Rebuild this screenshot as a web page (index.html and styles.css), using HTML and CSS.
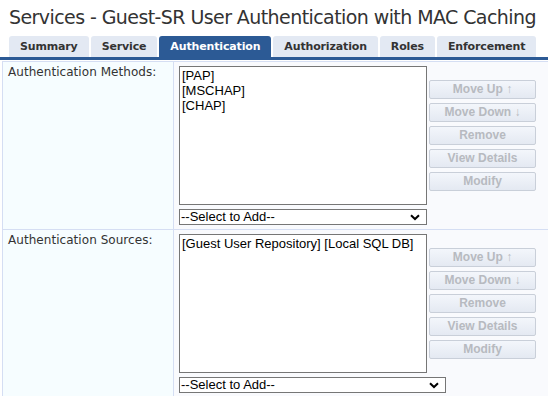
FILE: index.html
```html
<!DOCTYPE html>
<html>
<head>
<meta charset="utf-8">
<link rel="stylesheet" href="styles.css">
</head>
<body>
<h1 class="title">Services - Guest-SR User Authentication with MAC Caching</h1>
<div class="tabs">
  <div class="tab">Summary</div>
  <div class="tab">Service</div>
  <div class="tab active">Authentication</div>
  <div class="tab">Authorization</div>
  <div class="tab">Roles</div>
  <div class="tab">Enforcement</div>
</div>
<div class="form">
  <div class="row">
    <div class="label">Authentication Methods:</div>
    <div class="field">
      <div class="listrow">
        <div class="listbox">
          <div>[PAP]</div>
          <div>[MSCHAP]</div>
          <div>[CHAP]</div>
        </div>
        <div class="buttons">
          <div class="btn">Move Up ↑</div>
          <div class="btn">Move Down ↓</div>
          <div class="btn">Remove</div>
          <div class="btn">View Details</div>
          <div class="btn">Modify</div>
        </div>
      </div>
      <div class="select">--Select to Add--<svg class="chev" width="10" height="7" viewBox="0 0 10 7"><path d="M1 1.2 L5 5 L9 1.2" fill="none" stroke="#000" stroke-width="2"/></svg></div>
    </div>
  </div>
  <div class="row">
    <div class="label">Authentication Sources:</div>
    <div class="field">
      <div class="listrow">
        <div class="listbox">
          <div>[Guest User Repository] [Local SQL DB]</div>
        </div>
        <div class="buttons">
          <div class="btn">Move Up ↑</div>
          <div class="btn">Move Down ↓</div>
          <div class="btn">Remove</div>
          <div class="btn">View Details</div>
          <div class="btn">Modify</div>
        </div>
      </div>
      <div class="select wide">--Select to Add--<svg class="chev" width="10" height="7" viewBox="0 0 10 7"><path d="M1 1.2 L5 5 L9 1.2" fill="none" stroke="#000" stroke-width="2"/></svg></div>
    </div>
  </div>
</div>
</body>
</html>
```
FILE: styles.css
```css
html, body {
  margin: 0;
  padding: 0;
  background: #ffffff;
  font-family: "DejaVu Sans", Verdana, sans-serif;
  color: #333;
  overflow: hidden;
}
.title {
  margin: 0;
  padding: 5px 0 0 9px;
  height: 36px;
  box-sizing: border-box;
  font-size: 19px;
  font-weight: normal;
  line-height: 24px;
  letter-spacing: -0.58px;
  color: #333;
  white-space: nowrap;
}
.tabs {
  display: flex;
  gap: 2px;
  padding-left: 9px;
  border-bottom: 3px solid #2c5a95;
}
.tab {
  height: 21px;
  line-height: 22px;
  padding: 0 11px;
  background: #e3e9f3;
  border-radius: 3px 3px 0 0;
  font-size: 11px;
  font-weight: bold;
  letter-spacing: -0.15px;
  color: #333;
}
.tab.active {
  background: #2c5a95;
  color: #fff;
}
.form {
  margin: 1px 0 0 2px;
  border-top: 1px solid #d5def3;
}
.row {
  display: grid;
  grid-template-columns: 172px 1fr;
  border-bottom: 1px solid #d5def3;
}
.row:last-child { border-bottom: none; }
.label {
  background: #f6fdff;
  border-left: 1px solid #d5def3;
  border-right: 1px solid #d5def3;
  padding: 3px 0 0 5px;
  font-size: 12px;
  line-height: 15px;
  letter-spacing: 0.05px;
  color: #333;
}
.field {
  background: #f9fafd;
  padding: 4px 0 4px 5px;
}
.listrow {
  display: flex;
  align-items: center;
  gap: 2px;
}
.listbox {
  width: 248px;
  height: 139px;
  box-sizing: border-box;
  border: 1px solid #767676;
  background: #fff;
  padding: 1px 2px;
  font-family: "Liberation Sans", Arial, sans-serif;
  font-size: 13px;
  line-height: 15px;
  color: #000;
}
.buttons {
  display: flex;
  flex-direction: column;
  gap: 4px;
}
.btn {
  width: 107px;
  height: 19px;
  box-sizing: border-box;
  border: 1px solid #c9cfd9;
  border-radius: 2px;
  background: linear-gradient(#f3f6fb, #e4e9f2);
  font-family: "Liberation Sans", Arial, sans-serif;
  font-size: 12px;
  font-weight: bold;
  color: #b7bac0;
  text-align: center;
  line-height: 17px;
}
.select {
  margin-top: 4px;
  width: 248px;
  height: 16px;
  box-sizing: border-box;
  border: 1px solid #767676;
  background: #fff;
  font-family: "Liberation Sans", Arial, sans-serif;
  font-size: 13px;
  line-height: 14px;
  color: #000;
  padding-left: 1px;
  display: flex;
  align-items: center;
  justify-content: space-between;
  padding-right: 6px;
}
.select.wide { width: 267px; }
.chev { display: block; }
```
